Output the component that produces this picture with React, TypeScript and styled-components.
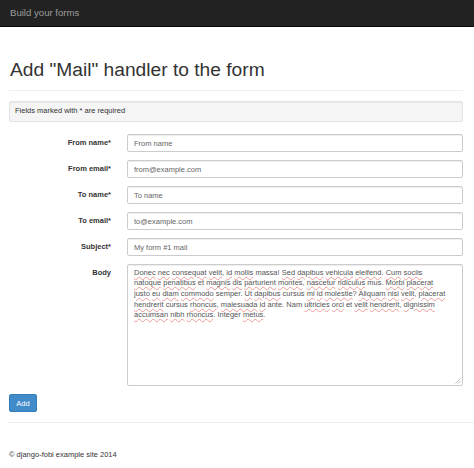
import React from 'react';
import styled, { createGlobalStyle } from 'styled-components';

const GlobalStyle = createGlobalStyle`
  body {
    margin: 0;
    background: #fff;
    font-family: "Liberation Sans", Arial, Helvetica, sans-serif;
    font-size: 7.5px;
    line-height: 10.66px;
    color: #333;
  }
`;

const fields = [
  { label: 'From name*', value: 'From name' },
  { label: 'From email*', value: 'from@example.com' },
  { label: 'To name*', value: 'To name' },
  { label: 'To email*', value: 'to@example.com' },
  { label: 'Subject*', value: 'My form #1 mail' },
];

const bodyLines = [
  'Donec nec consequat velit, id mollis massa! Sed dapibus vehicula eleifend. Cum sociis',
  'natoque penatibus et magnis dis parturient montes, nascetur ridiculus mus. Morbi placerat',
  'justo eu diam commodo semper. Ut dapibus cursus mi id molestie? Aliquam nisi velit, placerat',
  'hendrerit cursus rhoncus, malesuada id ante. Nam ultricies orci et velit hendrerit, dignissim',
  'accumsan nibh rhoncus. Integer metus.',
];

// words the spell checker accepts; everything else gets the red squiggle
const known = ['massa', 'et', 'mus', 'semper', 'cursus', 'ante', 'Nam', 'Integer'];

const SpellLine = ({ text }: { text: string }) => {
  const tokens = text.split(' ');
  return (
    <Line>
      {tokens.map((tok, i) => {
        const m = tok.match(/^([A-Za-z]+)(.*)$/);
        const word = m ? m[1] : tok;
        const rest = m ? m[2] : '';
        return (
          <React.Fragment key={i}>
            {known.includes(word) ? word : <Typo>{word}</Typo>}
            {rest}
            {i < tokens.length - 1 ? ' ' : ''}
          </React.Fragment>
        );
      })}
    </Line>
  );
};

const App = () => {
  return (
    <>
      <GlobalStyle />
      <Navbar>
        <Brand>Build your forms</Brand>
      </Navbar>
      <Container>
        <Heading>Add "Mail" handler to the form</Heading>
        <Divider />
        <Well>Fields marked with * are required</Well>
        <Form>
          {fields.map((f) => (
            <FormRow key={f.label}>
              <Label>{f.label}</Label>
              <Input readOnly value={f.value} />
            </FormRow>
          ))}
          <FormRow>
            <Label>Body</Label>
            <TextArea>
              {bodyLines.map((l) => (
                <SpellLine key={l} text={l} />
              ))}
              <Grip width="6" height="6" viewBox="0 0 6 6">
                <path d="M5.5 0.5 L0.5 5.5 M5.5 3 L3 5.5" stroke="#b5b5b5" strokeWidth="0.8" />
              </Grip>
            </TextArea>
          </FormRow>
        </Form>
        <Button>Add</Button>
      </Container>
      <Footer>
        <FooterRule />
        <FooterText>© django-fobi example site 2014</FooterText>
      </Footer>
    </>
  );
};

export default App;

const Navbar = styled.div`
  height: 26px;
  background: #222;
  border-bottom: 1px solid #080808;
  display: flex;
  align-items: center;
  padding-left: 10px;
`;

const Brand = styled.span`
  font-size: 9.6px;
  color: #9d9d9d;
`;

const Container = styled.div`
  padding: 0 11px 0 9px;
`;

const Heading = styled.h1`
  margin: 32px 0 0 1px;
  font-size: 19.2px;
  line-height: 21.1px;
  font-weight: 400;
  color: #333;
`;

const Divider = styled.div`
  height: 1px;
  background: #eee;
  margin: 10px 0;
`;

const Well = styled.div`
  box-sizing: border-box;
  height: 21px;
  display: flex;
  align-items: center;
  padding: 0 5px;
  background: #f5f5f5;
  border: 1px solid #e3e3e3;
  border-radius: 2px;
  box-shadow: inset 0 1px 1px rgba(0, 0, 0, 0.05);
  margin-bottom: 12px;
`;

const Form = styled.div`
  display: flex;
  flex-direction: column;
  gap: 8px;
`;

const FormRow = styled.div`
  display: grid;
  grid-template-columns: 102px 1fr;
  column-gap: 16px;
  align-items: start;
`;

const Label = styled.label`
  padding-top: 3.7px;
  text-align: right;
  font-weight: 700;
  color: #333;
`;

const Input = styled.input`
  box-sizing: border-box;
  width: 100%;
  height: 18px;
  margin: 0;
  padding: 0 6px;
  border: 1px solid #ccc;
  border-radius: 2px;
  box-shadow: inset 0 1px 1px rgba(0, 0, 0, 0.075);
  font-family: inherit;
  font-size: 7.5px;
  color: #666;
  outline: none;
`;

const TextArea = styled.div`
  position: relative;
  box-sizing: border-box;
  height: 122px;
  padding: 2.5px 6px;
  border: 1px solid #ccc;
  border-radius: 2px;
  box-shadow: inset 0 1px 1px rgba(0, 0, 0, 0.075);
  color: #555;
`;

const Line = styled.div`
  white-space: nowrap;
`;

const Typo = styled.span`
  text-decoration: underline wavy rgba(230, 80, 80, 0.55);
  text-decoration-thickness: 1px;
  text-underline-offset: 0.5px;
`;

const Grip = styled.svg`
  position: absolute;
  right: 1px;
  bottom: 1px;
`;

const Button = styled.button`
  display: block;
  box-sizing: border-box;
  width: 28px;
  height: 18px;
  margin-top: 8px;
  padding: 0;
  background: #428bca;
  border: 1px solid #357ebd;
  border-radius: 2px;
  color: #fff;
  font-family: inherit;
  font-size: 7.5px;
`;

const Footer = styled.div`
  padding-left: 8px;
`;

const FooterRule = styled.div`
  height: 1px;
  background: #eee;
  margin-top: 10px;
`;

const FooterText = styled.p`
  margin: 27px 0 0 1px;
  color: #333;
`;
